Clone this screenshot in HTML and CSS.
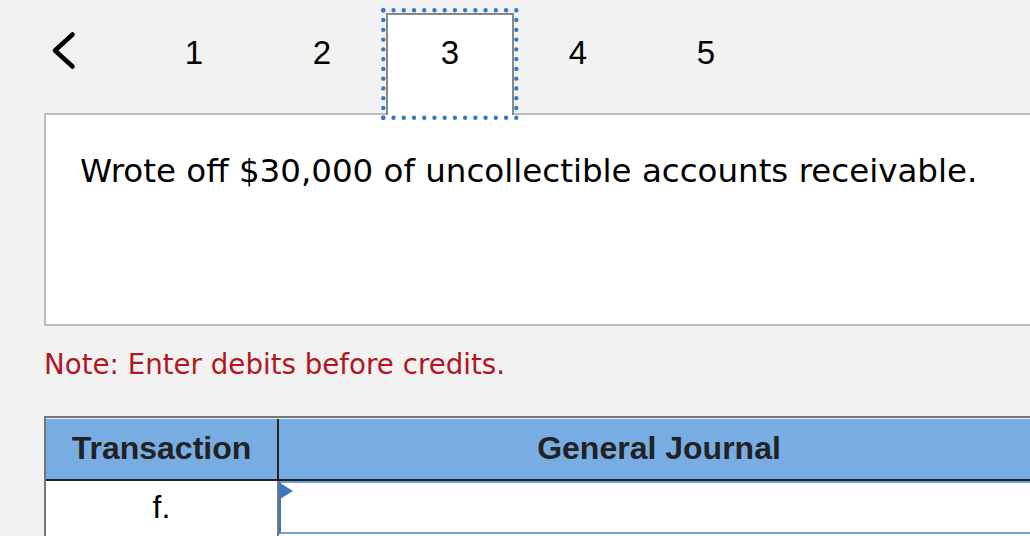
FILE: index.html
```html
<!DOCTYPE html>
<html lang="en">
<head>
<meta charset="utf-8">
<title>Journal entry</title>
<link rel="stylesheet" href="styles.css">
</head>
<body>
<div class="page">
  <nav class="tabs">
    <button class="back" aria-label="Previous">
      <svg width="86" height="102" viewBox="0 0 86 102" aria-hidden="true">
        <polyline points="28.5,21.5 11,37.5 28.5,53.5" fill="none" stroke="#000" stroke-width="4.6" stroke-linecap="round" stroke-linejoin="round"/>
      </svg>
    </button>
    <div class="tab">1</div>
    <div class="tab">2</div>
    <div class="tab active">3
      <svg class="focus" width="138" height="112" viewBox="0 0 138 112" aria-hidden="true">
        <g fill="none" stroke="#3a78c4" stroke-width="4.4" stroke-linecap="round">
          <line x1="2.3" y1="2.3" x2="135.3" y2="2.3" stroke-dasharray="0 10.2308"/>
          <line x1="2.3" y1="109.7" x2="135.3" y2="109.7" stroke-dasharray="0 10.2308"/>
          <line x1="2.3" y1="2.3" x2="2.3" y2="109.7" stroke-dasharray="0 9.7636"/>
          <line x1="135.3" y1="2.3" x2="135.3" y2="109.7" stroke-dasharray="0 9.7636"/>
        </g>
      </svg>
    </div>
    <div class="tab">4</div>
    <div class="tab">5</div>
  </nav>
  <section class="question">
    <p>Wrote off $30,000 of uncollectible accounts receivable.</p>
  </section>
  <p class="note">Note: Enter debits before credits.</p>
  <div class="journal">
    <div class="row head">
      <div class="cell first">Transaction</div>
      <div class="cell second">General Journal</div>
    </div>
    <div class="row body">
      <div class="cell first">f.</div>
      <div class="cell entry"><div class="input"></div></div>
    </div>
  </div>
</div>
</body>
</html>
```
FILE: styles.css
```css
html, body {
  margin: 0;
  padding: 0;
}
body {
  background: #f2f2f2;
  width: 1030px;
  height: 536px;
  overflow: hidden;
  font-family: "Liberation Sans", Arial, sans-serif;
  color: #000;
}
.page {
  padding-left: 44px;
}
.tabs {
  display: flex;
  margin-top: 13px;
  height: 102px;
  position: relative;
  z-index: 1;
}
.back {
  width: 86px;
  height: 102px;
  padding: 0;
  margin: 0;
  border: none;
  background: none;
  display: block;
}
.back svg {
  display: block;
}
.tab {
  width: 128px;
  box-sizing: border-box;
  height: 102px;
  border: 2px solid transparent;
  border-bottom: none;
  text-align: center;
  font-size: 33px;
  line-height: 40px;
  padding-top: 18px;
}
.tab.active {
  position: relative;
  background: #fff;
  border-color: #888;
}
.focus {
  position: absolute;
  left: -7px;
  top: -7px;
  display: block;
}
.question {
  margin-top: -2px;
  width: 984px;
  height: 209px;
  background: #fff;
  border: 2px solid #bcbcbc;
  border-right: none;
}
.question p {
  margin: 0;
  padding: 36px 0 0 34px;
  font-family: "DejaVu Sans", Verdana, sans-serif;
  font-size: 32.5px;
  line-height: 40px;
  white-space: nowrap;
}
.note {
  margin: 22px 0 0;
  font-family: "DejaVu Sans", Verdana, sans-serif;
  font-size: 27.7px;
  line-height: 34px;
  color: #b2161e;
}
.journal {
  margin-top: 34px;
  width: 984px;
  border-left: 2px solid #777;
  border-top: 2px solid #777;
}
.row {
  display: grid;
  grid-template-columns: 233px 1fr;
}
.head {
  background: #78ade3;
  border-top: 1px solid #e6eef8;
  border-bottom: 2px solid #222;
  height: 60px;
}
.head .cell {
  font-weight: bold;
  font-size: 32px;
  line-height: 59px;
  text-align: center;
  color: #222;
}
.head .cell.first {
  border-right: 2px solid #222;
}
.head .cell.second {
  padding-left: 9px;
}
.body {
  background: #fff;
  height: 60px;
}
.body .cell.first {
  border-right: 2px solid #777;
  text-align: center;
  font-size: 32px;
  line-height: 40px;
  padding-top: 6px;
}
.entry {
  position: relative;
}
.input {
  height: 53px;
  box-sizing: border-box;
  border: 2px solid #6d9ed6;
  border-left-color: #3a77c2;
  border-right: none;
  background: #fff;
}
.entry::before {
  content: "";
  position: absolute;
  left: 1px;
  top: 2px;
  width: 0;
  height: 0;
  border-top: 8.5px solid transparent;
  border-bottom: 8.5px solid transparent;
  border-left: 13px solid #3a77c2;
}
```
